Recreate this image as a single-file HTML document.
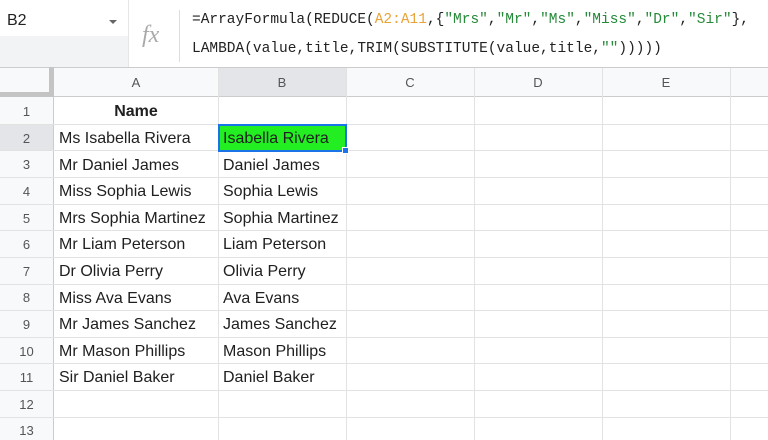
<!DOCTYPE html>
<html><head><style>
*{margin:0;padding:0;box-sizing:border-box}
body{width:768px;height:440px;overflow:hidden;background:#fff;font-family:"Liberation Sans",Arial,sans-serif;position:relative}
.a{position:absolute}
.mono{font-family:"Liberation Mono",monospace;font-size:14.5px;color:#222;white-space:pre}
.hl{background:#f8f9fa}
.vl{position:absolute;width:1px;background:#e2e2e2}
.hz{position:absolute;height:1px;background:#e2e2e2}
.rn{position:absolute;left:0;width:53px;text-align:center;font-size:13px;color:#555}
.c{position:absolute;font-size:16px;color:#202020;white-space:nowrap}
.ch{position:absolute;top:68px;height:29px;line-height:29px;text-align:center;font-size:13px;color:#555}
</style></head><body>
<div class="a" style="left:0;top:0;width:768px;height:67px;background:#fff"></div>
<div class="a" style="left:0;top:36px;width:128px;height:31px;background:#f1f3f4"></div>
<div class="a" style="left:7px;top:12px;font-size:16px;color:#222">B2</div>
<div class="a" style="left:109px;top:20px;width:0;height:0;border-left:4px solid transparent;border-right:4px solid transparent;border-top:4px solid #666"></div>
<div class="a" style="left:128px;top:0;width:1px;height:67px;background:#e6e6e6"></div>
<div class="a" style="left:142px;top:22px;font-family:'Liberation Serif',serif;font-style:italic;font-size:24px;color:#aaa">fx</div>
<div class="a" style="left:179px;top:10px;width:1px;height:52px;background:#ddd"></div>
<div class="a mono" style="left:192px;top:12px">=ArrayFormula(REDUCE(<span style="color:#e8a33a">A2:A11</span>,{<span style="color:#268a3a">"Mrs"</span>,<span style="color:#268a3a">"Mr"</span>,<span style="color:#268a3a">"Ms"</span>,<span style="color:#268a3a">"Miss"</span>,<span style="color:#268a3a">"Dr"</span>,<span style="color:#268a3a">"Sir"</span>},</div>
<div class="a mono" style="left:192px;top:41px">LAMBDA(value,title,TRIM(SUBSTITUTE(value,title,<span style="color:#268a3a">""</span>)))))</div>
<div class="a hl" style="left:0;top:67px;width:768px;height:30px"></div>
<div class="a" style="left:0;top:67px;width:768px;height:1px;background:#ccc"></div>
<div class="a" style="left:0;top:96px;width:768px;height:1px;background:#ccc"></div>
<div class="a hl" style="left:0;top:97px;width:53px;height:343px"></div>
<div class="a" style="left:49px;top:67px;width:5px;height:30px;background:#c4c4c4"></div>
<div class="a" style="left:0;top:92px;width:54px;height:5px;background:#c4c4c4"></div>
<div class="a" style="left:53px;top:97px;width:1px;height:343px;background:#ccc"></div>
<div class="a" style="left:0;top:124px;width:53px;height:27px;background:#e3e5e8"></div>
<div class="a" style="left:218px;top:68px;width:128px;height:28px;background:#e3e5e8"></div>
<div class="ch" style="left:54px;width:164px">A</div>
<div class="ch" style="left:218px;width:128px">B</div>
<div class="ch" style="left:346px;width:128px">C</div>
<div class="ch" style="left:474px;width:128px">D</div>
<div class="ch" style="left:602px;width:128px">E</div>
<div class="vl" style="left:218px;top:68px;height:372px"></div>
<div class="vl" style="left:346px;top:68px;height:372px"></div>
<div class="vl" style="left:474px;top:68px;height:372px"></div>
<div class="vl" style="left:602px;top:68px;height:372px"></div>
<div class="vl" style="left:730px;top:68px;height:372px"></div>
<div class="hz" style="left:0;top:123.6px;width:768px"></div>
<div class="hz" style="left:0;top:150.3px;width:768px"></div>
<div class="hz" style="left:0;top:176.9px;width:768px"></div>
<div class="hz" style="left:0;top:203.6px;width:768px"></div>
<div class="hz" style="left:0;top:230.2px;width:768px"></div>
<div class="hz" style="left:0;top:256.8px;width:768px"></div>
<div class="hz" style="left:0;top:283.5px;width:768px"></div>
<div class="hz" style="left:0;top:310.1px;width:768px"></div>
<div class="hz" style="left:0;top:336.8px;width:768px"></div>
<div class="hz" style="left:0;top:363.4px;width:768px"></div>
<div class="hz" style="left:0;top:390px;width:768px"></div>
<div class="hz" style="left:0;top:416.7px;width:768px"></div>

<div class="rn" style="top:104px">1</div>
<div class="rn" style="top:131px">2</div>
<div class="rn" style="top:157px">3</div>
<div class="rn" style="top:184px">4</div>
<div class="rn" style="top:211px">5</div>
<div class="rn" style="top:237px">6</div>
<div class="rn" style="top:264px">7</div>
<div class="rn" style="top:290px">8</div>
<div class="rn" style="top:317px">9</div>
<div class="rn" style="top:344px">10</div>
<div class="rn" style="top:370px">11</div>
<div class="rn" style="top:397px">12</div>
<div class="rn" style="top:423px">13</div>

<div class="c" style="left:54px;width:164px;text-align:center;top:103px;font-weight:bold">Name</div>
<div class="a" style="left:218px;top:124px;width:129px;height:28px;background:#22ee22;border:2px solid #1a73e8"></div>
<div class="a" style="left:342px;top:147px;width:7px;height:7px;background:#1a73e8;border:1px solid #fff"></div>

<div class="c" style="left:59px;top:130px">Ms Isabella Rivera</div><div class="c" style="left:223px;top:130px">Isabella Rivera</div>
<div class="c" style="left:59px;top:157px">Mr Daniel James</div><div class="c" style="left:223px;top:157px">Daniel James</div>
<div class="c" style="left:59px;top:183px">Miss Sophia Lewis</div><div class="c" style="left:223px;top:183px">Sophia Lewis</div>
<div class="c" style="left:59px;top:210px">Mrs Sophia Martinez</div><div class="c" style="left:223px;top:210px">Sophia Martinez</div>
<div class="c" style="left:59px;top:236px">Mr Liam Peterson</div><div class="c" style="left:223px;top:236px">Liam Peterson</div>
<div class="c" style="left:59px;top:263px">Dr Olivia Perry</div><div class="c" style="left:223px;top:263px">Olivia Perry</div>
<div class="c" style="left:59px;top:290px">Miss Ava Evans</div><div class="c" style="left:223px;top:290px">Ava Evans</div>
<div class="c" style="left:59px;top:316px">Mr James Sanchez</div><div class="c" style="left:223px;top:316px">James Sanchez</div>
<div class="c" style="left:59px;top:343px">Mr Mason Phillips</div><div class="c" style="left:223px;top:343px">Mason Phillips</div>
<div class="c" style="left:59px;top:369px">Sir Daniel Baker</div><div class="c" style="left:223px;top:369px">Daniel Baker</div>
</body></html>
